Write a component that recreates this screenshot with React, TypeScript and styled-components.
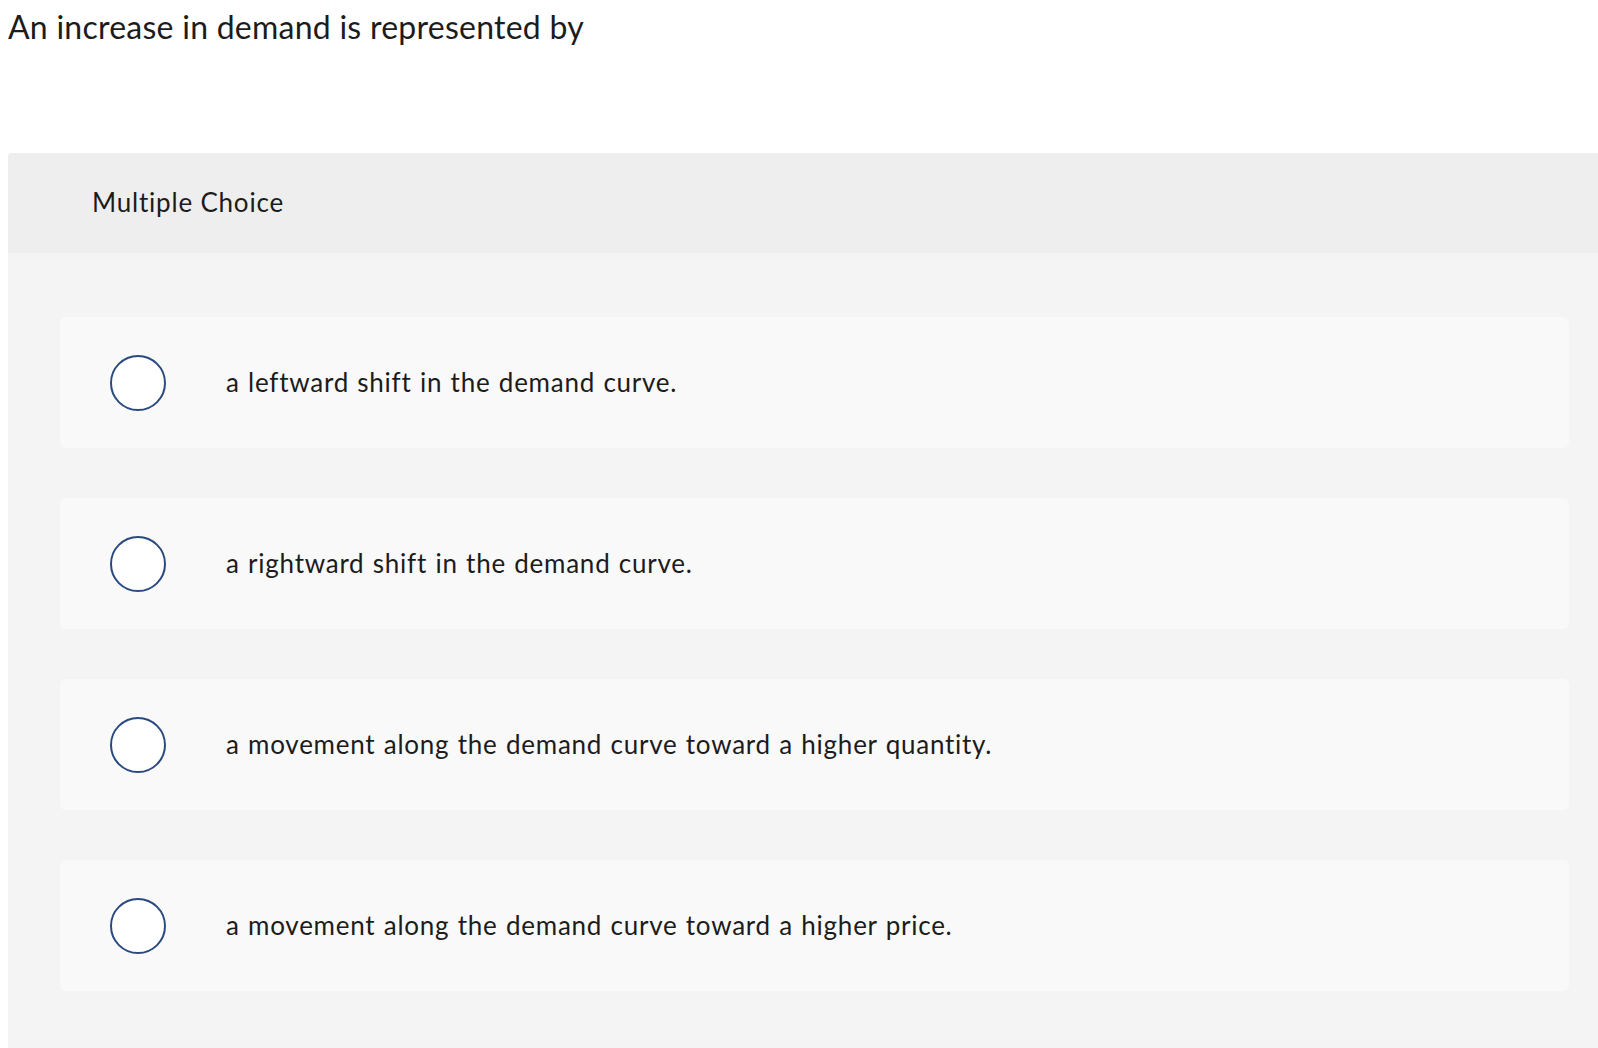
import React from 'react';
import styled, { createGlobalStyle } from 'styled-components';

const GlobalStyle = createGlobalStyle`
  html {
    overflow: hidden;
  }
  body {
    margin: 8px 0 0 8px;
    background: #ffffff;
    font-family: Lato, "Open Sans", sans-serif;
    color: #1c1c1c;
  }
`;

const Question = styled.div`
  font-size: 32px;
  line-height: 38px;
  letter-spacing: 0.25px;
  height: 145px;
`;

const Panel = styled.div`
  width: 1610px;
  background: #f4f4f4;
  border-radius: 4px 0 0 0;
  overflow: hidden;
`;

const PanelHeader = styled.div`
  height: 100px;
  box-sizing: border-box;
  padding: 0 0 3px 84px;
  background: #eeeeee;
  display: flex;
  align-items: center;
  font-size: 26px;
  letter-spacing: 0.8px;
`;

const ChoiceList = styled.div`
  display: flex;
  flex-direction: column;
  gap: 50px;
  padding: 64px 0 80px 52px;
`;

const ChoiceCard = styled.label`
  width: 1509px;
  height: 131px;
  box-sizing: border-box;
  background: #f9f9f9;
  border-radius: 6px;
  display: flex;
  align-items: center;
  padding-left: 50px;
  cursor: pointer;
`;

const Radio = styled.span`
  width: 56px;
  height: 56px;
  box-sizing: border-box;
  border: 2px solid #2a4a7f;
  border-radius: 50%;
  background: #ffffff;
  flex-shrink: 0;
  margin-right: 60px;
`;

const ChoiceText = styled.span`
  font-size: 26px;
  letter-spacing: 0.75px;
  word-spacing: 1px;
  padding-bottom: 2px;
`;

const choices = [
  'a leftward shift in the demand curve.',
  'a rightward shift in the demand curve.',
  'a movement along the demand curve toward a higher quantity.',
  'a movement along the demand curve toward a higher price.',
];

const App: React.FC = () => {
  return (
    <>
      <GlobalStyle />
      <Question>An increase in demand is represented by</Question>
      <Panel>
        <PanelHeader>Multiple Choice</PanelHeader>
        <ChoiceList>
          {choices.map((c) => (
            <ChoiceCard key={c}>
              <Radio />
              <ChoiceText>{c}</ChoiceText>
            </ChoiceCard>
          ))}
        </ChoiceList>
      </Panel>
    </>
  );
};

export default App;
